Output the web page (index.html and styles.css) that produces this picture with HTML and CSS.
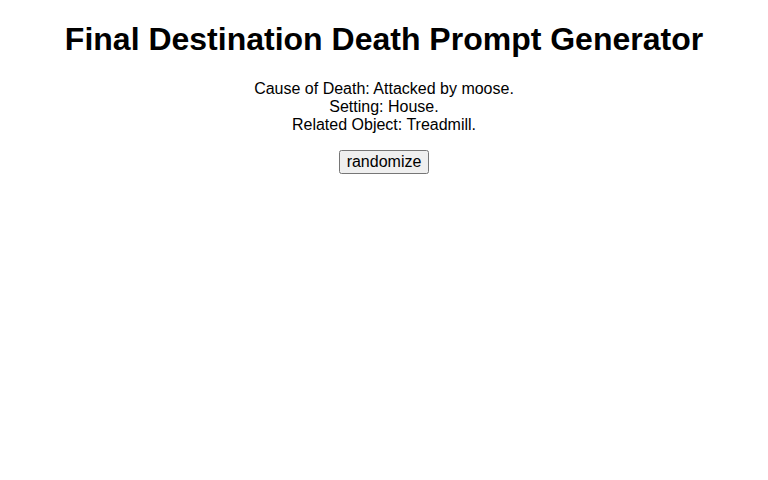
FILE: index.html
```html
<!DOCTYPE html>
<html lang="en">

<head>
    <meta charset="UTF-8">
    <meta name="viewport" content="width=device-width, initial-scale=1.0">
    <title>Final Destination Death Prompt Generator</title>
    <link rel="stylesheet" href="styles.css">
</head>

<body>
    <h1>Final Destination Death Prompt Generator</h1>
    <p id="prompt">
        Cause of Death: Attacked by moose.<br>
        Setting: House.<br>
        Related Object: Treadmill.
    </p>
    <button id="randomize">randomize</button>
</body>

</html>
```

FILE: styles.css
```css
body {
    font-family: "Liberation Sans", Arial, sans-serif;
    text-align: center;
    margin: 0;
    color: #000;
    background-color: #fff;
}

h1 {
    font-size: 32px;
}

#prompt {
    font-size: 16px;
}

#randomize {
    font-family: "Liberation Sans", Arial, sans-serif;
    font-size: 16px;
}
```
